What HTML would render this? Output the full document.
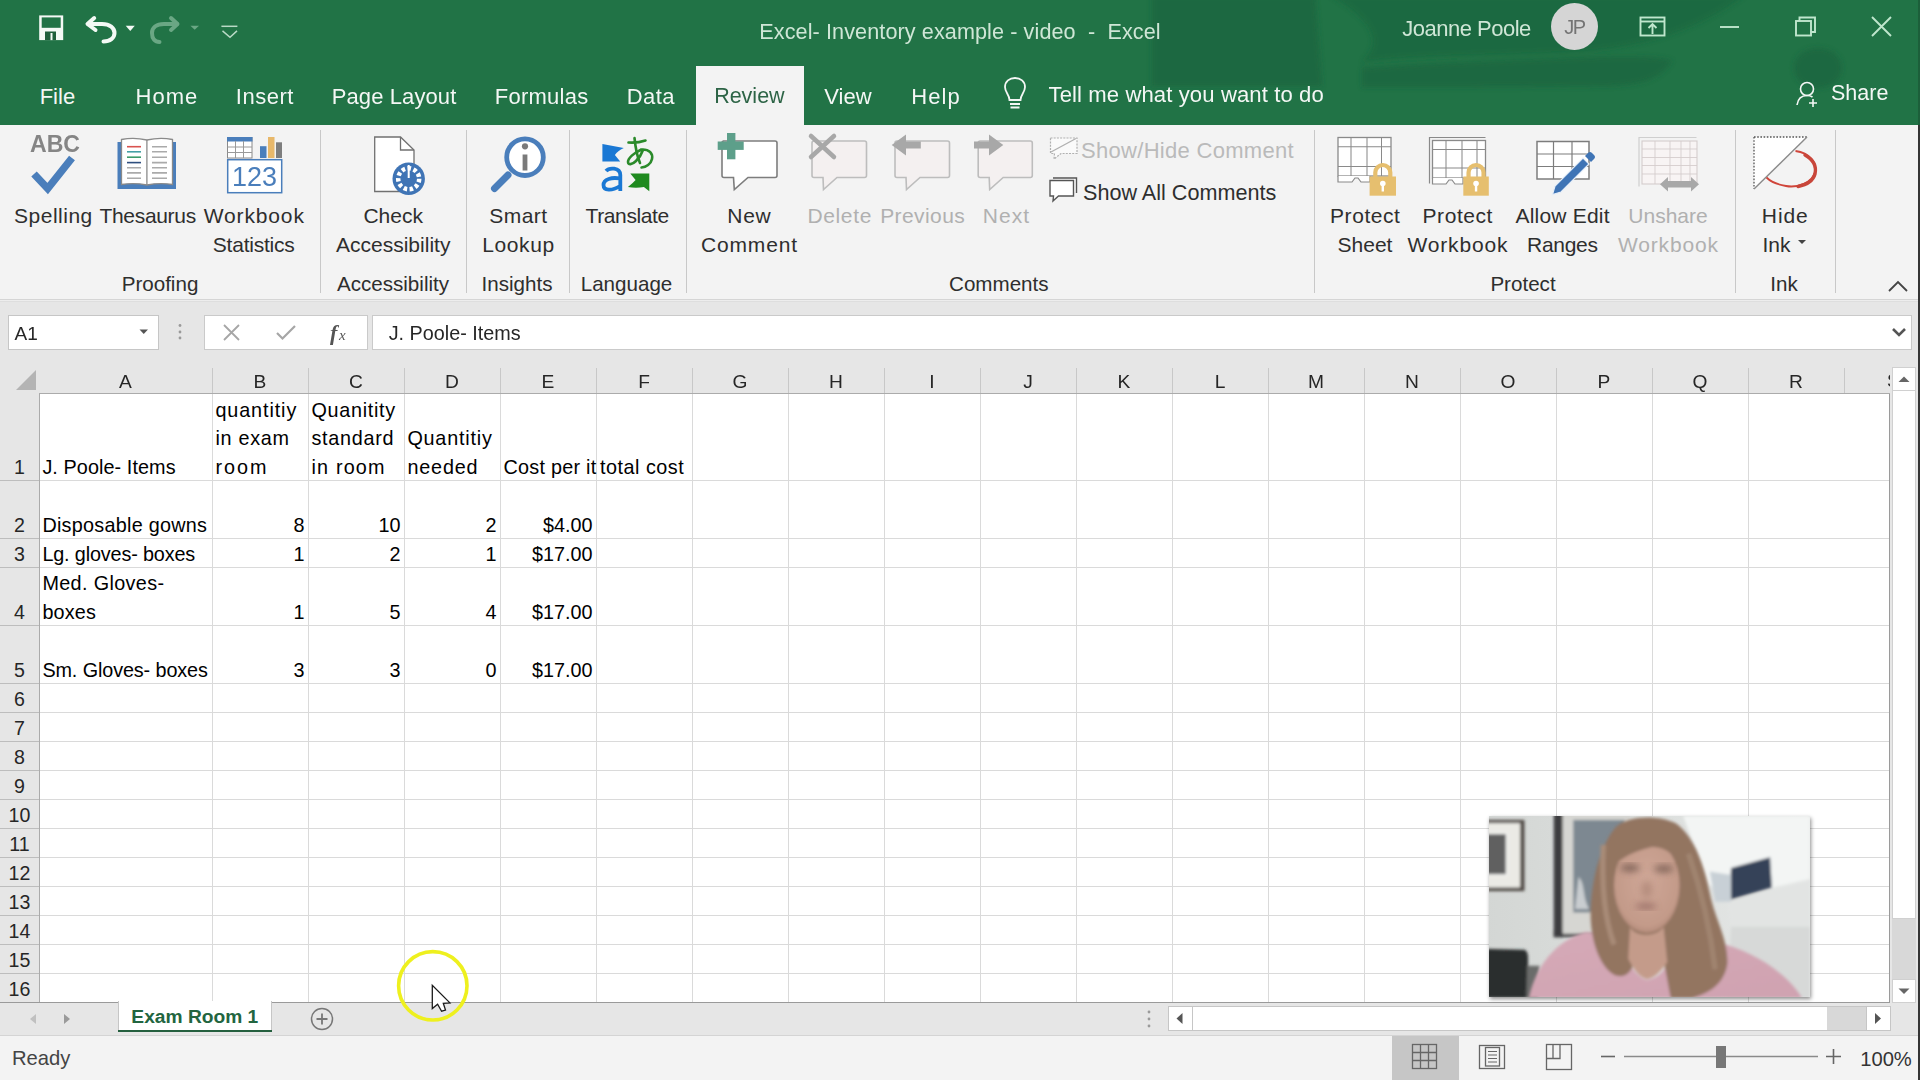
<!DOCTYPE html>
<html><head><meta charset="utf-8"><title>Excel</title>
<style>
html,body{margin:0;padding:0}
body{width:1920px;height:1080px;overflow:hidden;position:relative;background:#fff;font-family:"Liberation Sans",sans-serif}
.t{position:absolute;white-space:nowrap}
.r{position:absolute;display:block}
</style></head><body>
<div class="r" style="left:0px;top:0px;width:1920px;height:125px;background:#217346;"></div>
<svg class="r" style="left:0px;top:0px;" width="1920" height="125" viewBox="0 0 1920 125">
<defs><filter id="bl" x="-20%" y="-50%" width="140%" height="200%"><feGaussianBlur stdDeviation="2.5"/></filter></defs>
<g filter="url(#bl)" fill="#1d6640" opacity="0.8">
<path d="M1152 -5 H1315 L1322 86 H1152 Z"/>
<path d="M1330 -5 H1745 C1700 30 1640 48 1580 52 C1500 56 1420 55 1362 62 C1385 40 1370 20 1330 -5 Z" opacity="0.8"/>
<path d="M1362 68 C1440 62 1520 60 1600 57 C1640 56 1665 57 1672 61 C1660 80 1640 86 1600 86 C1520 87 1420 87 1362 87 Z"/>
<ellipse cx="1818" cy="68" rx="24" ry="20"/>
</g></svg>
<svg class="r" style="left:36px;top:12px;" width="210" height="36" viewBox="0 0 210 36">
<rect x="3.2" y="3.4" width="24" height="24.7" fill="#f4f9f5"/>
<rect x="5.7" y="5.4" width="19" height="10.4" fill="#217346"/>
<rect x="9" y="19.5" width="11" height="8.6" fill="#1f5f3a"/>
<rect x="14.5" y="21" width="2" height="7.1" fill="#f4f9f5"/>
<g fill="none" stroke="#f4f9f5" stroke-width="4" stroke-linecap="round" stroke-linejoin="round">
<path d="M52.5 12 H66 C74 12 78.5 16 78.5 21 C78.5 26 74 29.5 67.5 29.5"/>
<path d="M58.2 6 L51.5 12 L59.5 18"/>
</g>
<path d="M89.7 13.8 H98.8 L94.25 19 Z" fill="#f4f9f5"/>
<g fill="none" stroke="#6aa784" stroke-width="4" stroke-linecap="round" stroke-linejoin="round">
<path d="M141 12 H128 C120 12 116 16 116 21 C116 27 119 30 123.5 30"/>
<path d="M135 6 L141.5 12 L135 18"/>
</g>
<path d="M154.4 13.8 H163 L158.7 17.8 Z" fill="#6aa784"/>
<path d="M185.4 14.3 H201.4" stroke="#b9dac6" stroke-width="1.5"/>
<path d="M186.5 18.9 L194 25.2 L201 18.9" fill="none" stroke="#b9dac6" stroke-width="1.5"/>
</svg>
<div class="t" style="left:460px;width:1000px;text-align:center;top:20.72px;font-size:21.6px;line-height:21.6px;color:#cfe6d6;letter-spacing:0.1px">Excel- Inventory example - video&nbsp; -&nbsp; Excel</div>
<div class="t" style="left:966.5px;width:1000px;text-align:center;top:17.68px;font-size:22px;line-height:22px;color:#cfe6d6;letter-spacing:-0.5px">Joanne Poole</div>
<div class="r" style="left:1551px;top:3px;width:47px;height:47px;border-radius:50%;background:#d5d5d5"></div>
<div class="t" style="left:1074.5px;width:1000px;text-align:center;top:16.87px;font-size:20px;line-height:20px;color:#747474;letter-spacing:-1.5px">JP</div>
<svg class="r" style="left:1630px;top:10px;" width="290" height="36" viewBox="0 0 290 36">
<g fill="none" stroke="#bfe6cd" stroke-width="1.9">
<rect x="10.5" y="7.5" width="24" height="18"/>
<path d="M10.5 11.5 H34.5"/>
<path d="M22.5 24 V14 M18.5 18 L22.5 14 L26.5 18"/>
<path d="M90 17 H109"/>
<rect x="166" y="11" width="15" height="14.5"/>
<path d="M169.5 11 V7.5 H185 V22 H181"/>
<path d="M242 7 L261 26 M261 7 L242 26"/>
</g></svg>
<div class="t" style="left:-442.6px;width:1000px;text-align:center;top:85.88px;font-size:22px;line-height:22px;color:#f4f7f5;">File</div>
<div class="t" style="left:-333.1px;width:1000px;text-align:center;top:85.88px;font-size:22px;line-height:22px;color:#f4f7f5;letter-spacing:1.0px">Home</div>
<div class="t" style="left:-235.14999999999998px;width:1000px;text-align:center;top:85.88px;font-size:22px;line-height:22px;color:#f4f7f5;letter-spacing:0.5px">Insert</div>
<div class="t" style="left:-105.94999999999999px;width:1000px;text-align:center;top:85.88px;font-size:22px;line-height:22px;color:#f4f7f5;letter-spacing:0.1px">Page Layout</div>
<div class="t" style="left:41.625px;width:1000px;text-align:center;top:85.88px;font-size:22px;line-height:22px;color:#f4f7f5;letter-spacing:0.25px">Formulas</div>
<div class="t" style="left:150.80000000000007px;width:1000px;text-align:center;top:85.88px;font-size:22px;line-height:22px;color:#f4f7f5;letter-spacing:0.4px">Data</div>
<div class="t" style="left:347.9px;width:1000px;text-align:center;top:85.88px;font-size:22px;line-height:22px;color:#f4f7f5;">View</div>
<div class="t" style="left:436.04999999999995px;width:1000px;text-align:center;top:85.88px;font-size:22px;line-height:22px;color:#f4f7f5;letter-spacing:1.1px">Help</div>
<div class="r" style="left:696px;top:66px;width:108px;height:59px;background:#f3f3f3;"></div>
<div class="t" style="left:249.39999999999998px;width:1000px;text-align:center;top:85.80px;font-size:21.5px;line-height:21.5px;color:#2d6446;">Review</div>
<svg class="r" style="left:1000px;top:76px;" width="32" height="38" viewBox="0 0 32 38">
<g fill="none" stroke="#f4f7f5" stroke-width="1.8">
<path d="M9.5 24 C9.5 19 5 16.5 5 11 C5 5.5 9.5 2 15 2 C20.5 2 25 5.5 25 11 C25 16.5 20.5 19 20.5 24 Z"/>
<path d="M10 28 H20 M10.5 31.5 H19.5"/>
</g></svg>
<div class="t" style="left:1048.5px;top:83.99px;font-size:22.1px;line-height:22.1px;color:#f4f7f5;letter-spacing:0.1px">Tell me what you want to do</div>
<svg class="r" style="left:1792px;top:80px;" width="32" height="30" viewBox="0 0 32 30">
<g fill="none" stroke="#f4f7f5" stroke-width="1.6">
<circle cx="15" cy="9" r="6.5"/>
<path d="M5 25 C6 18 10 15.5 15 15.5 C17 15.5 19 16 20.5 17"/>
<path d="M21 19 V27 M17 23 H25"/>
</g></svg>
<div class="t" style="left:1831px;top:83.30px;font-size:21.5px;line-height:21.5px;color:#f4f7f5;">Share</div>
<div class="r" style="left:0px;top:125px;width:1920px;height:174px;background:#f3f3f3;"></div>
<div class="r" style="left:0px;top:299px;width:1920px;height:1px;background:#d5d5d5;"></div>
<div class="r" style="left:320px;top:130px;width:1px;height:163px;background:#c8c8c8;"></div>
<div class="r" style="left:466px;top:130px;width:1px;height:163px;background:#c8c8c8;"></div>
<div class="r" style="left:569px;top:130px;width:1px;height:163px;background:#c8c8c8;"></div>
<div class="r" style="left:686px;top:130px;width:1px;height:163px;background:#c8c8c8;"></div>
<div class="r" style="left:1314px;top:130px;width:1px;height:163px;background:#c8c8c8;"></div>
<div class="r" style="left:1735px;top:130px;width:1px;height:163px;background:#c8c8c8;"></div>
<div class="r" style="left:1835px;top:130px;width:1px;height:163px;background:#c8c8c8;"></div>
<div class="t" style="left:-446.55px;width:1000px;text-align:center;top:204.72px;font-size:21px;line-height:21px;color:#2e2e2e;letter-spacing:0.5px">Spelling</div>
<div class="t" style="left:-352.355px;width:1000px;text-align:center;top:204.72px;font-size:21px;line-height:21px;color:#2e2e2e;letter-spacing:-0.31px">Thesaurus</div>
<div class="t" style="left:-245.76999999999998px;width:1000px;text-align:center;top:204.72px;font-size:21px;line-height:21px;color:#2e2e2e;letter-spacing:0.86px">Workbook</div>
<div class="t" style="left:-246.31px;width:1000px;text-align:center;top:233.52px;font-size:21px;line-height:21px;color:#2e2e2e;letter-spacing:-0.22px">Statistics</div>
<div class="t" style="left:-106.80000000000001px;width:1000px;text-align:center;top:204.72px;font-size:21px;line-height:21px;color:#2e2e2e;">Check</div>
<div class="t" style="left:-106.80000000000001px;width:1000px;text-align:center;top:233.52px;font-size:21px;line-height:21px;color:#2e2e2e;">Accessibility</div>
<div class="t" style="left:18.450000000000045px;width:1000px;text-align:center;top:204.72px;font-size:21px;line-height:21px;color:#2e2e2e;letter-spacing:0.5px">Smart</div>
<div class="t" style="left:18.5px;width:1000px;text-align:center;top:233.52px;font-size:21px;line-height:21px;color:#2e2e2e;letter-spacing:0.6px">Lookup</div>
<div class="t" style="left:127.19999999999993px;width:1000px;text-align:center;top:204.72px;font-size:21px;line-height:21px;color:#2e2e2e;letter-spacing:-0.4px">Translate</div>
<div class="t" style="left:249.375px;width:1000px;text-align:center;top:204.72px;font-size:21px;line-height:21px;color:#2e2e2e;letter-spacing:0.75px">New</div>
<div class="t" style="left:249.41499999999996px;width:1000px;text-align:center;top:233.52px;font-size:21px;line-height:21px;color:#2e2e2e;letter-spacing:0.83px">Comment</div>
<div class="t" style="left:339.72px;width:1000px;text-align:center;top:204.72px;font-size:21px;line-height:21px;color:#b0b0b0;letter-spacing:0.64px">Delete</div>
<div class="t" style="left:422.71500000000003px;width:1000px;text-align:center;top:204.72px;font-size:21px;line-height:21px;color:#b0b0b0;letter-spacing:0.43px">Previous</div>
<div class="t" style="left:506.53499999999997px;width:1000px;text-align:center;top:204.72px;font-size:21px;line-height:21px;color:#b0b0b0;letter-spacing:1.07px">Next</div>
<div class="t" style="left:865.2750000000001px;width:1000px;text-align:center;top:204.72px;font-size:21px;line-height:21px;color:#2e2e2e;letter-spacing:0.55px">Protect</div>
<div class="t" style="left:865.0px;width:1000px;text-align:center;top:233.52px;font-size:21px;line-height:21px;color:#2e2e2e;">Sheet</div>
<div class="t" style="left:957.7750000000001px;width:1000px;text-align:center;top:204.72px;font-size:21px;line-height:21px;color:#2e2e2e;letter-spacing:0.55px">Protect</div>
<div class="t" style="left:957.9300000000001px;width:1000px;text-align:center;top:233.52px;font-size:21px;line-height:21px;color:#2e2e2e;letter-spacing:0.86px">Workbook</div>
<div class="t" style="left:1062.61px;width:1000px;text-align:center;top:204.72px;font-size:21px;line-height:21px;color:#2e2e2e;letter-spacing:0.22px">Allow Edit</div>
<div class="t" style="left:1062.36px;width:1000px;text-align:center;top:233.52px;font-size:21px;line-height:21px;color:#2e2e2e;letter-spacing:-0.28px">Ranges</div>
<div class="t" style="left:1168.0px;width:1000px;text-align:center;top:204.72px;font-size:21px;line-height:21px;color:#b0b0b0;">Unshare</div>
<div class="t" style="left:1168.43px;width:1000px;text-align:center;top:233.52px;font-size:21px;line-height:21px;color:#b0b0b0;letter-spacing:0.86px">Workbook</div>
<div class="t" style="left:1285.25px;width:1000px;text-align:center;top:204.72px;font-size:21px;line-height:21px;color:#2e2e2e;letter-spacing:0.9px">Hide</div>
<div class="t" style="left:1276.5px;width:1000px;text-align:center;top:233.52px;font-size:21px;line-height:21px;color:#2e2e2e;">Ink</div>
<svg class="r" style="left:1797px;top:239px;" width="10" height="8" viewBox="0 0 10 8"><path d="M1 1 H9 L5 5 Z" fill="#444"/></svg>
<div class="t" style="left:-340px;width:1000px;text-align:center;top:273.86px;font-size:20.6px;line-height:20.6px;color:#2e2e2e;">Proofing</div>
<div class="t" style="left:-107px;width:1000px;text-align:center;top:273.86px;font-size:20.6px;line-height:20.6px;color:#2e2e2e;">Accessibility</div>
<div class="t" style="left:17px;width:1000px;text-align:center;top:273.86px;font-size:20.6px;line-height:20.6px;color:#2e2e2e;">Insights</div>
<div class="t" style="left:126.5px;width:1000px;text-align:center;top:273.86px;font-size:20.6px;line-height:20.6px;color:#2e2e2e;">Language</div>
<div class="t" style="left:498.79999999999995px;width:1000px;text-align:center;top:273.86px;font-size:20.6px;line-height:20.6px;color:#2e2e2e;">Comments</div>
<div class="t" style="left:1023px;width:1000px;text-align:center;top:273.86px;font-size:20.6px;line-height:20.6px;color:#2e2e2e;">Protect</div>
<div class="t" style="left:1284px;width:1000px;text-align:center;top:273.86px;font-size:20.6px;line-height:20.6px;color:#2e2e2e;">Ink</div>
<div class="t" style="left:1081px;top:140.18px;font-size:22px;line-height:22px;color:#bababa;letter-spacing:0.3px">Show/Hide Comment</div>
<div class="t" style="left:1083px;top:181.72px;font-size:21.6px;line-height:21.6px;color:#2e2e2e;">Show All Comments</div>
<svg class="r" style="left:1886px;top:278px;" width="24" height="16" viewBox="0 0 24 16"><path d="M3 13 L12 4 L21 13" fill="none" stroke="#444" stroke-width="1.8"/></svg>
<svg class="r" style="left:0;top:0" width="1920" height="310" viewBox="0 0 1920 310">
<text x="30" y="152" font-family="Liberation Sans" font-weight="bold" font-size="24" fill="#858585" textLength="50" lengthAdjust="spacingAndGlyphs">ABC</text>
<path d="M34 174 L47.7 188.5 L72 158" fill="none" stroke="#4a7ebb" stroke-width="7.5" stroke-linejoin="miter"/>
<rect x="117.5" y="142" width="58.5" height="47" fill="#4a7ebb"/>
<path d="M121.5 139.5 Q134 137 146.9 140 Q160 137 172.5 139.5 V184.5 Q160 182.5 146.9 185 Q134 182.5 121.5 184.5 Z" fill="#fff" stroke="#8a8a8a" stroke-width="1.3"/>
<path d="M146.9 140 V185" stroke="#8a8a8a" stroke-width="1.3"/>
<g stroke-width="1.6">
<path d="M127 146.7 H141" stroke="#d9534f"/><path d="M127 151.8 H141" stroke="#45a0a6"/>
<path d="M127 157.2 H141" stroke="#3c9b6b"/><path d="M127 162.6 H141" stroke="#2f4f7f"/>
<path d="M127 167.7 H141 M127 172.9 H141 M127 178.3 H141" stroke="#aaa"/>
<path d="M152 146.7 H167 M152 151.8 H167 M152 157.2 H167 M152 162.6 H167 M152 167.7 H167 M152 172.9 H167 M152 178.3 H167" stroke="#aaa"/>
</g>
<rect x="227.5" y="137.5" width="24.5" height="20.5" fill="#fff" stroke="#8a8a8a" stroke-width="1"/>
<rect x="227" y="137" width="25.5" height="4.5" fill="#4a7ebb"/>
<path d="M227.5 147 H252 M227.5 152.5 H252 M235.5 141 V158 M243.5 141 V158" stroke="#9a9a9a" stroke-width="1"/>
<rect x="260" y="146.2" width="6.5" height="11.8" fill="#4a7ebb"/>
<rect x="268" y="137" width="6.5" height="21" fill="#e8b86a"/>
<rect x="276" y="142.3" width="6" height="15.7" fill="#7d7d7d"/>
<rect x="227.7" y="159.7" width="54" height="33" fill="#fff" stroke="#4a7ebb" stroke-width="1.5"/>
<text x="254.5" y="186" font-family="Liberation Sans" font-size="27.5" fill="#4a7ebb" text-anchor="middle" textLength="45" lengthAdjust="spacingAndGlyphs">123</text>
<path d="M374.7 137 H400.5 L414 150 V191.5 H374.7 Z" fill="#fff" stroke="#707070" stroke-width="1.3"/>
<path d="M400.5 137 V150 H414" fill="none" stroke="#707070" stroke-width="1.3"/>
<circle cx="408.7" cy="178.8" r="16.2" fill="#3f74b5"/>
<circle cx="408.7" cy="178.8" r="10.5" fill="none" stroke="#fff" stroke-width="4.5" stroke-dasharray="3.5 2.5"/>
<circle cx="408.7" cy="178.8" r="6" fill="#3f74b5"/>
<path d="M408.7 165 V178" stroke="#fff" stroke-width="2"/>
<circle cx="525" cy="157.2" r="18.3" fill="#fff" stroke="#4a7ebb" stroke-width="4.8"/>
<path d="M494.5 188.5 L508 175" stroke="#4a7ebb" stroke-width="7" stroke-linecap="round"/>
<circle cx="525" cy="146.3" r="3.1" fill="#7a7a7a"/>
<rect x="522.6" y="154.5" width="4.8" height="16" fill="#7a7a7a"/>
<path d="M602.4 143.9 L623.8 148 Q617.5 151 614.9 155.1 L620.2 161.6 H602.4 Z" fill="#1a78d4"/>
<path d="M606 171 C609 167.5 620 167 620.3 175 V191 M620 178.5 C612 177 603.5 179 603.5 185 C603.5 191 612 191 620 186" fill="none" stroke="#1a78d4" stroke-width="3.8"/>
<g fill="none" stroke="#2a8a2a" stroke-width="2.6" stroke-linecap="round">
<path d="M628.5 142.5 C635 143 641 142 645.5 140.5"/>
<path d="M634.5 138 C635.5 148 637 156 640 163"/>
<path d="M641 149.5 C650 149 653 154 652 159 C651 164 646 167 641.5 167.5"/>
<path d="M640.5 150 C634 153 628 158 628 162 C628 165 632 165 636 161 C640 157 642 153 643 150"/>
</g>
<path d="M630.3 173.5 H649.3 V191.3 L643.9 187.1 Q636 188.5 627.9 187.1 Q633 183 635.6 180 Z" fill="#1f8a1f"/>
<path d="M723 141 H775 Q777 141 777 143 V175.5 Q777 177.5 775 177.5 H748 L734.3 189.5 L733.5 177.5 H724 Q722 177.5 722 175.5 V143 Q722 141 724 141 Z" fill="#fff" stroke="#7d7d7d" stroke-width="1.6"/>
<rect x="727" y="133" width="8.4" height="26.3" fill="#5d9f8a"/>
<rect x="717.7" y="141.5" width="26" height="8.4" fill="#5d9f8a"/>
<path d="M814 141 H864.5 Q866.5 141 866.5 143 V175.5 Q866.5 177.5 864.5 177.5 H837 L823.5 189.5 L823 177.5 H814 Q812 177.5 812 175.5 V143 Q812 141 814 141 Z" fill="#f4f0f0" stroke="#bdbdbd" stroke-width="1.6"/><path d="M811 157 L834 136 M811 136 L834 157" stroke="#a8a8a8" stroke-width="4.5" stroke-linecap="round"/><path d="M897 141 H947.5 Q949.5 141 949.5 143 V175.5 Q949.5 177.5 947.5 177.5 H920 L906.5 189.5 L906 177.5 H897 Q895 177.5 895 175.5 V143 Q895 141 897 141 Z" fill="#f4f0f0" stroke="#bdbdbd" stroke-width="1.6"/><path d="M891.7 145 L906 134.5 V141.5 H920.8 V148.5 H906 V155.5 Z" fill="#a8a8a8"/><path d="M980.2 141 H1030.3 Q1032.3 141 1032.3 143 V175.5 Q1032.3 177.5 1030.3 177.5 H1003.2 L989.7 189.5 L989.2 177.5 H980.2 Q978.2 177.5 978.2 175.5 V143 Q978.2 141 980.2 141 Z" fill="#f4f0f0" stroke="#bdbdbd" stroke-width="1.6"/><path d="M1003.3 145 L989 134.5 V141.5 H974 V148.5 H989 V155.5 Z" fill="#a8a8a8"/><path d="M1050.5 138 H1077 V153.5 H1061 L1054 159 L1054.5 153.5 H1050.5 Z" fill="#fafafa" stroke="#b0b0b0" stroke-width="1.2" stroke-dasharray="2 1.2"/>
<path d="M1051 152 L1076 138.5" stroke="#b0b0b0" stroke-width="1.3"/>
<path d="M1053 178 H1076.5 V193 M1050 180.5 H1073.5 V196 H1058.5 L1053 201 L1053.5 196 H1050 Z" fill="#fff" stroke="#555" stroke-width="1.4"/>
<rect x="1338" y="137.5" width="53" height="38.5" fill="#fff" stroke="#8a8a8a" stroke-width="1.3"/><path d="M1351 137.5 V176" stroke="#8a8a8a" stroke-width="1.04"/><path d="M1367 137.5 V176" stroke="#8a8a8a" stroke-width="1.04"/><path d="M1381.5 137.5 V176" stroke="#8a8a8a" stroke-width="1.04"/><path d="M1338 146.75 H1391" stroke="#8a8a8a" stroke-width="1.04"/><path d="M1338 166.5 H1391" stroke="#8a8a8a" stroke-width="1.04"/><path d="M1338 176 V182 H1352 L1355 178 H1358 L1361 182 H1370 V176" fill="#fff" stroke="#8a8a8a" stroke-width="1.2"/><path d="M1375.3 177.5 V172.5 A7.5 7.5 0 0 1 1390.3 172.5 V177.5" fill="none" stroke="#e6bf6f" stroke-width="4.2"/><rect x="1369.6" y="176.5" width="26.4" height="19.2" fill="#e6bf6f"/><circle cx="1382.8" cy="183.5" r="2.8" fill="#fff"/><rect x="1381.6" y="183.5" width="2.4" height="8" fill="#fff"/><path d="M1429.5 183.5 V137.5 H1485.5" fill="none" stroke="#8a8a8a" stroke-width="1.2"/><rect x="1432.5" y="140.5" width="53.0" height="37.5" fill="#fff" stroke="#8a8a8a" stroke-width="1.3"/><path d="M1446 140.5 V178" stroke="#8a8a8a" stroke-width="1.04"/><path d="M1462 140.5 V178" stroke="#8a8a8a" stroke-width="1.04"/><path d="M1477 140.5 V178" stroke="#8a8a8a" stroke-width="1.04"/><path d="M1432.5 149.5 H1485.5" stroke="#8a8a8a" stroke-width="1.04"/><path d="M1432.5 168 H1485.5" stroke="#8a8a8a" stroke-width="1.04"/><path d="M1432.5 178 V184 H1446 L1449 180 H1452 L1455 184 H1463 V178" fill="#fff" stroke="#8a8a8a" stroke-width="1.2"/><path d="M1468.55 177.5 V172.5 A7.5 7.5 0 0 1 1483.55 172.5 V177.5" fill="none" stroke="#e6bf6f" stroke-width="4.2"/><rect x="1463.3" y="176.5" width="25.5" height="19.2" fill="#e6bf6f"/><circle cx="1476.05" cy="183.5" r="2.8" fill="#fff"/><rect x="1474.85" y="183.5" width="2.4" height="8" fill="#fff"/><rect x="1537" y="141.5" width="52" height="37.5" fill="#fff" stroke="#7d7d7d" stroke-width="1.5"/><path d="M1553.5 141.5 V179" stroke="#7d7d7d" stroke-width="1.2000000000000002"/><path d="M1572 141.5 V179" stroke="#7d7d7d" stroke-width="1.2000000000000002"/><path d="M1537 154 H1589" stroke="#7d7d7d" stroke-width="1.2000000000000002"/><path d="M1537 166.5 H1589" stroke="#7d7d7d" stroke-width="1.2000000000000002"/><path d="M1552.5 194.5 L1555 186 L1583 158 L1589 164 L1561 192 Z" fill="#3f74b5" stroke="#e6eef8" stroke-width="1.2"/><path d="M1585 156 L1588 153 Q1590 151 1592 153 L1594 155 Q1596 157 1594 159 L1591 162 Z" fill="#3f74b5"/><path d="M1639 186.5 V137.5 H1696.5" fill="none" stroke="#cfcfcf" stroke-width="1.2"/><rect x="1642" y="141" width="55" height="43" fill="#f8f4f4" stroke="#d4cccc" stroke-width="1.1"/><path d="M1655 141 V184" stroke="#d4cccc" stroke-width="0.8800000000000001"/><path d="M1670 141 V184" stroke="#d4cccc" stroke-width="0.8800000000000001"/><path d="M1681 141 V184" stroke="#d4cccc" stroke-width="0.8800000000000001"/><path d="M1690 141 V184" stroke="#d4cccc" stroke-width="0.8800000000000001"/><path d="M1642 149 H1697" stroke="#d4cccc" stroke-width="0.8800000000000001"/><path d="M1642 157.5 H1697" stroke="#d4cccc" stroke-width="0.8800000000000001"/><path d="M1642 165.5 H1697" stroke="#d4cccc" stroke-width="0.8800000000000001"/><path d="M1642 174 H1697" stroke="#d4cccc" stroke-width="0.8800000000000001"/><path d="M1660 184.2 L1668 177 V181 H1691 V177 L1699 184.2 L1691 191.5 V187.5 H1668 V191.5 Z" fill="#a8a8a8"/><path d="M1754 137 H1807 L1754 189 Z" fill="#fff"/>
<path d="M1754 137 H1807 M1754 137 V189" fill="none" stroke="#555" stroke-width="1.3" stroke-dasharray="1.6 1.6"/>
<path d="M1754 189 L1807 137" stroke="#8a8a8a" stroke-width="1.4"/>
<path d="M1795.5 151 C1810 153 1817 163 1815 172 C1812.5 183 1797 188 1786 186 C1777 184.5 1770 181 1766.5 177.5" fill="none" stroke="#d0453a" stroke-width="1.8"/><path d="M1805 155 C1814 160 1816.5 167 1815 174 C1813 181 1806 185 1798 186.5" fill="none" stroke="#c8463a" stroke-width="3.4" stroke-linecap="round"/>
</svg>
<div class="r" style="left:0px;top:300px;width:1920px;height:64px;background:#e6e6e6;"></div>
<div class="r" style="left:0px;top:300px;width:1920px;height:1px;background:#ededed;"></div>
<div class="r" style="left:0px;top:301px;width:1920px;height:1px;background:#dedede;"></div>
<div class="r" style="left:8px;top:315px;width:151px;height:35px;background:#fff;box-sizing:border-box;border:1px solid #c6c6c6"></div>
<div class="t" style="left:14.5px;top:323.72px;font-size:19px;line-height:19px;color:#262626;">A1</div>
<svg class="r" style="left:138px;top:328px;" width="12" height="8" viewBox="0 0 12 8"><path d="M1.5 1.5 H10 L5.75 6 Z" fill="#555"/></svg>
<svg class="r" style="left:176px;top:320px;" width="8" height="24" viewBox="0 0 8 24"><circle cx="4" cy="5.5" r="1.4" fill="#9a9a9a"/><circle cx="4" cy="12" r="1.4" fill="#9a9a9a"/><circle cx="4" cy="18" r="1.4" fill="#9a9a9a"/></svg>
<div class="r" style="left:204px;top:315px;width:164px;height:35px;background:#fff;box-sizing:border-box;border:1px solid #cacaca"></div>
<svg class="r" style="left:204px;top:315px;" width="164" height="35" viewBox="0 0 164 35">
<path d="M20 10 L35 25 M35 10 L20 25" stroke="#a6a6a6" stroke-width="1.8"/>
<path d="M73 18 L78.5 23.5 L91 11" fill="none" stroke="#a6a6a6" stroke-width="2.2"/>
<text x="126" y="25" font-family="Liberation Serif" font-style="italic" font-weight="bold" font-size="22" fill="#555">f</text>
<text x="135" y="25" font-family="Liberation Serif" font-style="italic" font-size="15" fill="#555">x</text>
</svg>
<div class="r" style="left:372px;top:315px;width:1540px;height:35px;background:#fff;box-sizing:border-box;border:1px solid #cacaca"></div>
<div class="t" style="left:388.7px;top:324.24px;font-size:19.8px;line-height:19.8px;color:#262626;">J. Poole- Items</div>
<svg class="r" style="left:1890px;top:326px;" width="18" height="14" viewBox="0 0 18 14"><path d="M3 3 L9 9 L15 3" fill="none" stroke="#555" stroke-width="2.6"/></svg>
<div class="r" style="left:0px;top:364px;width:1890px;height:30px;background:#e6e6e6;"></div>
<div class="r" style="left:39px;top:393px;width:1851px;height:1px;background:#ababab;"></div>
<svg class="r" style="left:14px;top:368px;" width="24" height="24" viewBox="0 0 24 24"><path d="M22 2 V22 H2 Z" fill="#b4b4b4"/></svg>
<div class="r" style="left:212px;top:368px;width:1px;height:25px;background:#c8c8c8;"></div>
<div class="t" style="left:-374.5px;width:1000px;text-align:center;top:371.95px;font-size:19.2px;line-height:19.2px;color:#262626;">A</div>
<div class="r" style="left:308px;top:368px;width:1px;height:25px;background:#c8c8c8;"></div>
<div class="t" style="left:-240.0px;width:1000px;text-align:center;top:371.95px;font-size:19.2px;line-height:19.2px;color:#262626;">B</div>
<div class="r" style="left:404px;top:368px;width:1px;height:25px;background:#c8c8c8;"></div>
<div class="t" style="left:-144.0px;width:1000px;text-align:center;top:371.95px;font-size:19.2px;line-height:19.2px;color:#262626;">C</div>
<div class="r" style="left:500px;top:368px;width:1px;height:25px;background:#c8c8c8;"></div>
<div class="t" style="left:-48.0px;width:1000px;text-align:center;top:371.95px;font-size:19.2px;line-height:19.2px;color:#262626;">D</div>
<div class="r" style="left:596px;top:368px;width:1px;height:25px;background:#c8c8c8;"></div>
<div class="t" style="left:48.0px;width:1000px;text-align:center;top:371.95px;font-size:19.2px;line-height:19.2px;color:#262626;">E</div>
<div class="r" style="left:692px;top:368px;width:1px;height:25px;background:#c8c8c8;"></div>
<div class="t" style="left:144.0px;width:1000px;text-align:center;top:371.95px;font-size:19.2px;line-height:19.2px;color:#262626;">F</div>
<div class="r" style="left:788px;top:368px;width:1px;height:25px;background:#c8c8c8;"></div>
<div class="t" style="left:240.0px;width:1000px;text-align:center;top:371.95px;font-size:19.2px;line-height:19.2px;color:#262626;">G</div>
<div class="r" style="left:884px;top:368px;width:1px;height:25px;background:#c8c8c8;"></div>
<div class="t" style="left:336.0px;width:1000px;text-align:center;top:371.95px;font-size:19.2px;line-height:19.2px;color:#262626;">H</div>
<div class="r" style="left:980px;top:368px;width:1px;height:25px;background:#c8c8c8;"></div>
<div class="t" style="left:432.0px;width:1000px;text-align:center;top:371.95px;font-size:19.2px;line-height:19.2px;color:#262626;">I</div>
<div class="r" style="left:1076px;top:368px;width:1px;height:25px;background:#c8c8c8;"></div>
<div class="t" style="left:528.0px;width:1000px;text-align:center;top:371.95px;font-size:19.2px;line-height:19.2px;color:#262626;">J</div>
<div class="r" style="left:1172px;top:368px;width:1px;height:25px;background:#c8c8c8;"></div>
<div class="t" style="left:624.0px;width:1000px;text-align:center;top:371.95px;font-size:19.2px;line-height:19.2px;color:#262626;">K</div>
<div class="r" style="left:1268px;top:368px;width:1px;height:25px;background:#c8c8c8;"></div>
<div class="t" style="left:720.0px;width:1000px;text-align:center;top:371.95px;font-size:19.2px;line-height:19.2px;color:#262626;">L</div>
<div class="r" style="left:1364px;top:368px;width:1px;height:25px;background:#c8c8c8;"></div>
<div class="t" style="left:816.0px;width:1000px;text-align:center;top:371.95px;font-size:19.2px;line-height:19.2px;color:#262626;">M</div>
<div class="r" style="left:1460px;top:368px;width:1px;height:25px;background:#c8c8c8;"></div>
<div class="t" style="left:912.0px;width:1000px;text-align:center;top:371.95px;font-size:19.2px;line-height:19.2px;color:#262626;">N</div>
<div class="r" style="left:1556px;top:368px;width:1px;height:25px;background:#c8c8c8;"></div>
<div class="t" style="left:1008.0px;width:1000px;text-align:center;top:371.95px;font-size:19.2px;line-height:19.2px;color:#262626;">O</div>
<div class="r" style="left:1652px;top:368px;width:1px;height:25px;background:#c8c8c8;"></div>
<div class="t" style="left:1104.0px;width:1000px;text-align:center;top:371.95px;font-size:19.2px;line-height:19.2px;color:#262626;">P</div>
<div class="r" style="left:1748px;top:368px;width:1px;height:25px;background:#c8c8c8;"></div>
<div class="t" style="left:1200.0px;width:1000px;text-align:center;top:371.95px;font-size:19.2px;line-height:19.2px;color:#262626;">Q</div>
<div class="r" style="left:1844px;top:368px;width:1px;height:25px;background:#c8c8c8;"></div>
<div class="t" style="left:1296.0px;width:1000px;text-align:center;top:371.95px;font-size:19.2px;line-height:19.2px;color:#262626;">R</div>
<div class="t" style="left:1887px;top:371.86px;font-size:18.6px;line-height:18.6px;color:#262626;"><span style="display:inline-block;width:3px;overflow:hidden">S</span></div>
<div class="r" style="left:0px;top:394px;width:39px;height:608px;background:#e6e6e6;"></div>
<div class="r" style="left:39px;top:394px;width:1px;height:608px;background:#ababab;"></div>
<div class="r" style="left:40px;top:394px;width:1849px;height:608px;background:#fff;"></div>
<div class="r" style="left:212px;top:394px;width:1px;height:608px;background:#dadada;"></div>
<div class="r" style="left:308px;top:394px;width:1px;height:608px;background:#dadada;"></div>
<div class="r" style="left:404px;top:394px;width:1px;height:608px;background:#dadada;"></div>
<div class="r" style="left:500px;top:394px;width:1px;height:608px;background:#dadada;"></div>
<div class="r" style="left:596px;top:394px;width:1px;height:608px;background:#dadada;"></div>
<div class="r" style="left:692px;top:394px;width:1px;height:608px;background:#dadada;"></div>
<div class="r" style="left:788px;top:394px;width:1px;height:608px;background:#dadada;"></div>
<div class="r" style="left:884px;top:394px;width:1px;height:608px;background:#dadada;"></div>
<div class="r" style="left:980px;top:394px;width:1px;height:608px;background:#dadada;"></div>
<div class="r" style="left:1076px;top:394px;width:1px;height:608px;background:#dadada;"></div>
<div class="r" style="left:1172px;top:394px;width:1px;height:608px;background:#dadada;"></div>
<div class="r" style="left:1268px;top:394px;width:1px;height:608px;background:#dadada;"></div>
<div class="r" style="left:1364px;top:394px;width:1px;height:608px;background:#dadada;"></div>
<div class="r" style="left:1460px;top:394px;width:1px;height:608px;background:#dadada;"></div>
<div class="r" style="left:1556px;top:394px;width:1px;height:608px;background:#dadada;"></div>
<div class="r" style="left:1652px;top:394px;width:1px;height:608px;background:#dadada;"></div>
<div class="r" style="left:1748px;top:394px;width:1px;height:608px;background:#dadada;"></div>
<div class="r" style="left:40px;top:480px;width:1849px;height:1px;background:#dadada;"></div>
<div class="r" style="left:0px;top:480px;width:39px;height:1px;background:#bdbdbd;"></div>
<div class="r" style="left:40px;top:538px;width:1849px;height:1px;background:#dadada;"></div>
<div class="r" style="left:0px;top:538px;width:39px;height:1px;background:#bdbdbd;"></div>
<div class="r" style="left:40px;top:567px;width:1849px;height:1px;background:#dadada;"></div>
<div class="r" style="left:0px;top:567px;width:39px;height:1px;background:#bdbdbd;"></div>
<div class="r" style="left:40px;top:625px;width:1849px;height:1px;background:#dadada;"></div>
<div class="r" style="left:0px;top:625px;width:39px;height:1px;background:#bdbdbd;"></div>
<div class="r" style="left:40px;top:683px;width:1849px;height:1px;background:#dadada;"></div>
<div class="r" style="left:0px;top:683px;width:39px;height:1px;background:#bdbdbd;"></div>
<div class="r" style="left:40px;top:712px;width:1849px;height:1px;background:#dadada;"></div>
<div class="r" style="left:0px;top:712px;width:39px;height:1px;background:#bdbdbd;"></div>
<div class="r" style="left:40px;top:741px;width:1849px;height:1px;background:#dadada;"></div>
<div class="r" style="left:0px;top:741px;width:39px;height:1px;background:#bdbdbd;"></div>
<div class="r" style="left:40px;top:770px;width:1849px;height:1px;background:#dadada;"></div>
<div class="r" style="left:0px;top:770px;width:39px;height:1px;background:#bdbdbd;"></div>
<div class="r" style="left:40px;top:799px;width:1849px;height:1px;background:#dadada;"></div>
<div class="r" style="left:0px;top:799px;width:39px;height:1px;background:#bdbdbd;"></div>
<div class="r" style="left:40px;top:828px;width:1849px;height:1px;background:#dadada;"></div>
<div class="r" style="left:0px;top:828px;width:39px;height:1px;background:#bdbdbd;"></div>
<div class="r" style="left:40px;top:857px;width:1849px;height:1px;background:#dadada;"></div>
<div class="r" style="left:0px;top:857px;width:39px;height:1px;background:#bdbdbd;"></div>
<div class="r" style="left:40px;top:886px;width:1849px;height:1px;background:#dadada;"></div>
<div class="r" style="left:0px;top:886px;width:39px;height:1px;background:#bdbdbd;"></div>
<div class="r" style="left:40px;top:915px;width:1849px;height:1px;background:#dadada;"></div>
<div class="r" style="left:0px;top:915px;width:39px;height:1px;background:#bdbdbd;"></div>
<div class="r" style="left:40px;top:944px;width:1849px;height:1px;background:#dadada;"></div>
<div class="r" style="left:0px;top:944px;width:39px;height:1px;background:#bdbdbd;"></div>
<div class="r" style="left:40px;top:973px;width:1849px;height:1px;background:#dadada;"></div>
<div class="r" style="left:0px;top:973px;width:39px;height:1px;background:#bdbdbd;"></div>
<div class="r" style="left:40px;top:1002px;width:1849px;height:1px;background:#dadada;"></div>
<div class="r" style="left:0px;top:1002px;width:39px;height:1px;background:#bdbdbd;"></div>
<div class="r" style="left:1889px;top:394px;width:1px;height:609px;background:#9a9a9a;"></div>
<div class="r" style="left:0px;top:1002px;width:1890px;height:1px;background:#9a9a9a;"></div>
<div class="t" style="left:-480.5px;width:1000px;text-align:center;top:457.81px;font-size:19.6px;line-height:19.6px;color:#262626;">1</div>
<div class="t" style="left:-480.5px;width:1000px;text-align:center;top:515.81px;font-size:19.6px;line-height:19.6px;color:#262626;">2</div>
<div class="t" style="left:-480.5px;width:1000px;text-align:center;top:544.81px;font-size:19.6px;line-height:19.6px;color:#262626;">3</div>
<div class="t" style="left:-480.5px;width:1000px;text-align:center;top:602.81px;font-size:19.6px;line-height:19.6px;color:#262626;">4</div>
<div class="t" style="left:-480.5px;width:1000px;text-align:center;top:660.81px;font-size:19.6px;line-height:19.6px;color:#262626;">5</div>
<div class="t" style="left:-480.5px;width:1000px;text-align:center;top:689.81px;font-size:19.6px;line-height:19.6px;color:#262626;">6</div>
<div class="t" style="left:-480.5px;width:1000px;text-align:center;top:718.81px;font-size:19.6px;line-height:19.6px;color:#262626;">7</div>
<div class="t" style="left:-480.5px;width:1000px;text-align:center;top:747.81px;font-size:19.6px;line-height:19.6px;color:#262626;">8</div>
<div class="t" style="left:-480.5px;width:1000px;text-align:center;top:776.81px;font-size:19.6px;line-height:19.6px;color:#262626;">9</div>
<div class="t" style="left:-480.5px;width:1000px;text-align:center;top:805.81px;font-size:19.6px;line-height:19.6px;color:#262626;">10</div>
<div class="t" style="left:-480.5px;width:1000px;text-align:center;top:834.81px;font-size:19.6px;line-height:19.6px;color:#262626;">11</div>
<div class="t" style="left:-480.5px;width:1000px;text-align:center;top:863.81px;font-size:19.6px;line-height:19.6px;color:#262626;">12</div>
<div class="t" style="left:-480.5px;width:1000px;text-align:center;top:892.81px;font-size:19.6px;line-height:19.6px;color:#262626;">13</div>
<div class="t" style="left:-480.5px;width:1000px;text-align:center;top:921.81px;font-size:19.6px;line-height:19.6px;color:#262626;">14</div>
<div class="t" style="left:-480.5px;width:1000px;text-align:center;top:950.81px;font-size:19.6px;line-height:19.6px;color:#262626;">15</div>
<div class="t" style="left:-480.5px;width:1000px;text-align:center;top:979.81px;font-size:19.6px;line-height:19.6px;color:#262626;">16</div>
<div class="t" style="left:42.4px;top:458.04px;font-size:19.8px;line-height:19.8px;color:#000;letter-spacing:0.09px">J. Poole- Items</div>
<div class="t" style="left:215.4px;top:400.74px;font-size:19.8px;line-height:19.8px;color:#000;letter-spacing:0.9px">quantitiy</div>
<div class="t" style="left:215.4px;top:429.44px;font-size:19.8px;line-height:19.8px;color:#000;letter-spacing:0.72px">in exam</div>
<div class="t" style="left:215.4px;top:458.04px;font-size:19.8px;line-height:19.8px;color:#000;letter-spacing:2.0px">room</div>
<div class="t" style="left:311.4px;top:400.74px;font-size:19.8px;line-height:19.8px;color:#000;letter-spacing:0.72px">Quanitity</div>
<div class="t" style="left:311.4px;top:429.44px;font-size:19.8px;line-height:19.8px;color:#000;letter-spacing:0.74px">standard</div>
<div class="t" style="left:311.4px;top:458.04px;font-size:19.8px;line-height:19.8px;color:#000;letter-spacing:1.2px">in room</div>
<div class="t" style="left:407.4px;top:429.44px;font-size:19.8px;line-height:19.8px;color:#000;letter-spacing:0.79px">Quantitiy</div>
<div class="t" style="left:407.4px;top:458.04px;font-size:19.8px;line-height:19.8px;color:#000;letter-spacing:0.84px">needed</div>
<div class="t" style="left:503.4px;top:458.04px;font-size:19.8px;line-height:19.8px;color:#000;letter-spacing:0.27px">Cost per it</div>
<div class="t" style="left:600px;top:458.04px;font-size:19.8px;line-height:19.8px;color:#000;letter-spacing:0.51px">total cost</div>
<div class="t" style="left:42.4px;top:574.04px;font-size:19.8px;line-height:19.8px;color:#000;letter-spacing:0.37px">Med. Gloves-</div>
<div class="t" style="left:42.4px;top:516.04px;font-size:19.8px;line-height:19.8px;color:#000;letter-spacing:0.27px">Disposable gowns</div>
<div class="t" style="left:-695.5px;width:1000px;text-align:right;top:516.04px;font-size:19.8px;line-height:19.8px;color:#000;">8</div>
<div class="t" style="left:-599.5px;width:1000px;text-align:right;top:516.04px;font-size:19.8px;line-height:19.8px;color:#000;">10</div>
<div class="t" style="left:-503.5px;width:1000px;text-align:right;top:516.04px;font-size:19.8px;line-height:19.8px;color:#000;">2</div>
<div class="t" style="left:-407.5px;width:1000px;text-align:right;top:516.04px;font-size:19.8px;line-height:19.8px;color:#000;">$4.00</div>
<div class="t" style="left:42.4px;top:545.04px;font-size:19.8px;line-height:19.8px;color:#000;letter-spacing:-0.14px">Lg. gloves- boxes</div>
<div class="t" style="left:-695.5px;width:1000px;text-align:right;top:545.04px;font-size:19.8px;line-height:19.8px;color:#000;">1</div>
<div class="t" style="left:-599.5px;width:1000px;text-align:right;top:545.04px;font-size:19.8px;line-height:19.8px;color:#000;">2</div>
<div class="t" style="left:-503.5px;width:1000px;text-align:right;top:545.04px;font-size:19.8px;line-height:19.8px;color:#000;">1</div>
<div class="t" style="left:-407.5px;width:1000px;text-align:right;top:545.04px;font-size:19.8px;line-height:19.8px;color:#000;">$17.00</div>
<div class="t" style="left:42.4px;top:603.04px;font-size:19.8px;line-height:19.8px;color:#000;letter-spacing:0.15px">boxes</div>
<div class="t" style="left:-695.5px;width:1000px;text-align:right;top:603.04px;font-size:19.8px;line-height:19.8px;color:#000;">1</div>
<div class="t" style="left:-599.5px;width:1000px;text-align:right;top:603.04px;font-size:19.8px;line-height:19.8px;color:#000;">5</div>
<div class="t" style="left:-503.5px;width:1000px;text-align:right;top:603.04px;font-size:19.8px;line-height:19.8px;color:#000;">4</div>
<div class="t" style="left:-407.5px;width:1000px;text-align:right;top:603.04px;font-size:19.8px;line-height:19.8px;color:#000;">$17.00</div>
<div class="t" style="left:42.4px;top:661.04px;font-size:19.8px;line-height:19.8px;color:#000;letter-spacing:-0.1px">Sm. Gloves- boxes</div>
<div class="t" style="left:-695.5px;width:1000px;text-align:right;top:661.04px;font-size:19.8px;line-height:19.8px;color:#000;">3</div>
<div class="t" style="left:-599.5px;width:1000px;text-align:right;top:661.04px;font-size:19.8px;line-height:19.8px;color:#000;">3</div>
<div class="t" style="left:-503.5px;width:1000px;text-align:right;top:661.04px;font-size:19.8px;line-height:19.8px;color:#000;">0</div>
<div class="t" style="left:-407.5px;width:1000px;text-align:right;top:661.04px;font-size:19.8px;line-height:19.8px;color:#000;">$17.00</div>
<div class="r" style="left:1890px;top:364px;width:28px;height:672px;background:#e6e6e6;"></div>
<div class="r" style="left:1892px;top:367px;width:24px;height:24px;background:#fff;box-sizing:border-box;border:1px solid #d0d0d0"></div>
<svg class="r" style="left:1892px;top:367px;" width="24" height="24" viewBox="0 0 24 24"><path d="M6.5 15 H17.5 L12 9.5 Z" fill="#666"/></svg>
<div class="r" style="left:1892px;top:391px;width:24px;height:528px;background:#fff;box-sizing:border-box;border:1px solid #d0d0d0;border-top:none"></div>
<div class="r" style="left:1892px;top:919px;width:24px;height:60px;background:#d8d8d8;"></div>
<div class="r" style="left:1892px;top:979px;width:24px;height:24px;background:#fff;box-sizing:border-box;border:1px solid #d0d0d0"></div>
<svg class="r" style="left:1892px;top:979px;" width="24" height="24" viewBox="0 0 24 24"><path d="M6.5 9.5 H17.5 L12 15 Z" fill="#666"/></svg>
<div class="r" style="left:0px;top:1003px;width:1890px;height:32px;background:#e6e6e6;"></div>
<div class="r" style="left:0px;top:1035px;width:1920px;height:1px;background:#d4d4d4;"></div>
<svg class="r" style="left:24px;top:1008px;" width="60" height="22" viewBox="0 0 60 22"><path d="M12 6 L6 11 L12 16 Z" fill="#c0c0c0"/><path d="M40 6 L46 11 L40 16 Z" fill="#9a9a9a"/></svg>
<div class="r" style="left:118px;top:1001px;width:154px;height:31px;background:#fff;box-sizing:border-box;border-left:1px solid #c6c6c6;border-right:1px solid #c6c6c6"></div>
<div class="r" style="left:118px;top:1030px;width:154px;height:2px;background:#245f3e;"></div>
<div class="t" style="left:-305.2px;width:1000px;text-align:center;top:1006.95px;font-size:19.2px;line-height:19.2px;color:#226540;font-weight:bold;">Exam Room 1</div>
<svg class="r" style="left:308px;top:1005px;" width="28" height="28" viewBox="0 0 28 28"><circle cx="14" cy="14" r="10.5" fill="none" stroke="#777" stroke-width="1.5"/><path d="M14 8.5 V19.5 M8.5 14 H19.5" stroke="#777" stroke-width="1.8"/></svg>
<svg class="r" style="left:1140px;top:1007px;" width="20" height="24" viewBox="0 0 20 24"><circle cx="9" cy="5" r="1.4" fill="#9a9a9a"/><circle cx="9" cy="12" r="1.4" fill="#9a9a9a"/><circle cx="9" cy="19" r="1.4" fill="#9a9a9a"/></svg>
<div class="r" style="left:1168px;top:1006px;width:723px;height:25px;background:#fff;box-sizing:border-box;border:1px solid #c6c6c6"></div>
<div class="r" style="left:1192px;top:1006px;width:1px;height:25px;background:#c6c6c6;"></div>
<div class="r" style="left:1827px;top:1007px;width:39px;height:23px;background:#d8d8d8;"></div>
<div class="r" style="left:1866px;top:1006px;width:1px;height:25px;background:#c6c6c6;"></div>
<svg class="r" style="left:1168px;top:1006px;" width="723" height="25" viewBox="0 0 723 25"><path d="M14.5 7 L8.5 12.5 L14.5 18 Z" fill="#555"/><path d="M707 7 L713 12.5 L707 18 Z" fill="#555"/></svg>
<div class="r" style="left:0px;top:1036px;width:1920px;height:44px;background:#f3f3f3;"></div>
<div class="t" style="left:12px;top:1047.90px;font-size:20.2px;line-height:20.2px;color:#444;">Ready</div>
<div class="r" style="left:1392px;top:1036px;width:67px;height:44px;background:#c6c6c6;"></div>
<svg class="r" style="left:1400px;top:1036px;" width="520" height="44" viewBox="0 0 520 44">
<g fill="none" stroke="#666" stroke-width="1.3">
<rect x="12.5" y="8.5" width="24" height="24"/>
<path d="M12.5 16.5 H36.5 M12.5 24.5 H36.5 M20.5 8.5 V32.5 M28.5 8.5 V32.5"/>
<rect x="79.5" y="9.5" width="25" height="23"/>
<rect x="85.5" y="11.5" width="14" height="18.5"/>
<path d="M88 15.5 H97 M88 19 H97 M88 22.5 H97 M88 26 H97" stroke-width="1.1"/>
<rect x="146.5" y="8.5" width="25" height="25"/>
<path d="M146.5 22.5 H160 V8.5 M153 8.5 V22.5"/>
<path d="M201 20.5 H215" stroke-width="1.6"/>
<path d="M224 20.5 H418" stroke="#8a8a8a" stroke-width="1.3"/>
<path d="M426 20.5 H441 M433.5 13 V28" stroke-width="1.6"/>
</g>
<rect x="316" y="10" width="10" height="22" fill="#777"/>
</svg>
<div class="t" style="left:1386px;width:1000px;text-align:center;top:1049.40px;font-size:20.2px;line-height:20.2px;color:#333;">100%</div>
<div class="r" style="left:1489px;top:816px;width:321px;height:181px;box-shadow:1px 2px 4px rgba(0,0,0,0.45);overflow:hidden;background:#ddd"><svg width="321" height="181" viewBox="55 38 1810 1017" preserveAspectRatio="none">
<defs>
<filter id="wb" x="-5%" y="-5%" width="110%" height="110%"><feGaussianBlur stdDeviation="9"/></filter>
<filter id="wb3" x="-5%" y="-5%" width="110%" height="110%"><feGaussianBlur stdDeviation="20"/></filter>
<linearGradient id="wall" x1="0" y1="0" x2="1" y2="0"><stop offset="0" stop-color="#d3d6d4"/><stop offset="0.5" stop-color="#dcdfdd"/><stop offset="1" stop-color="#e6e8e7"/></linearGradient>
<linearGradient id="pink" x1="0" y1="0" x2="1" y2="1"><stop offset="0" stop-color="#d5a9b7"/><stop offset="1" stop-color="#cfa2b0"/></linearGradient>
<radialGradient id="face" cx="0.5" cy="0.45" r="0.6"><stop offset="0" stop-color="#cfa797"/><stop offset="0.8" stop-color="#c39a89"/><stop offset="1" stop-color="#a98170"/></radialGradient>
</defs>
<rect x="0" y="0" width="1920" height="1100" fill="url(#wall)"/>
<g filter="url(#wb)">
<path d="M1150 38 H1865 V390 L1400 500 L1290 420 Z" fill="#f3f5f4"/>
<rect x="40" y="60" width="215" height="400" fill="#514b46"/>
<rect x="40" y="78" width="190" height="362" fill="#ebeae5"/>
<rect x="40" y="130" width="120" height="245" fill="#f4f4f2"/>
<rect x="40" y="140" width="110" height="225" fill="#616161"/>
<rect x="420" y="20" width="52" height="700" fill="#3d3d3f"/><rect x="420" y="680" width="260" height="38" fill="#3d3d3f"/>
<rect x="470" y="20" width="380" height="680" fill="#d6d6d2"/>
<rect x="530" y="60" width="290" height="520" fill="#7d8891"/>
<path d="M560 380 C600 420 580 500 620 560 L540 560 Z" fill="#c9cdd0"/>
<path d="M1400 520 L1865 400 V660 L1420 660 Z" fill="#e2e4e3"/>
<path d="M1420 660 H1865 V1060 H1400 Z" fill="#d7d9d8"/>
<path d="M1420 330 L1640 270 L1650 440 L1410 510 Z" fill="#364259"/>
<path d="M1300 350 L1420 370 L1420 520 L1330 520 Z" fill="#c8d0d6"/>
<path d="M40 800 Q40 780 70 785 L255 790 Q275 800 275 830 V1060 H40 Z" fill="#292d2d"/>
<path d="M270 880 L340 880 L330 1060 L265 1060 Z" fill="#6a6c6b"/>
</g>
<g filter="url(#wb)">
<path d="M280 1060 C320 880 430 740 600 690 L770 700 C830 860 880 940 945 960 C1010 950 1050 900 1070 850 L1390 760 C1580 820 1740 930 1820 1060 Z" fill="url(#pink)"/>
<path d="M770 100 C840 35 1010 30 1110 80 C1220 160 1270 330 1300 470 C1330 620 1400 720 1400 860 C1390 960 1320 1030 1200 1060 L1080 1060 C1060 960 1050 900 1040 850 L870 850 C870 900 830 960 760 930 C680 880 640 760 630 640 C620 480 660 230 770 100 Z" fill="#937460"/>
<ellipse cx="945" cy="430" rx="185" ry="265" fill="url(#face)"/>
<path d="M745 330 C760 180 850 110 960 110 C1060 115 1120 200 1150 330 C1100 250 1030 200 960 215 C880 235 800 270 745 330 Z" fill="#937460"/>
<path d="M850 660 C880 720 1000 720 1040 660 L1060 860 C1020 920 980 950 945 955 C900 940 870 900 840 840 Z" fill="#c49b8a"/>
<path d="M700 200 C690 400 700 600 760 760" stroke="#a88b77" stroke-width="30" fill="none"/>
<path d="M1180 250 C1250 450 1300 650 1330 900" stroke="#a08470" stroke-width="30" fill="none"/>
</g>
<g filter="url(#wb3)" opacity="0.9">
<ellipse cx="850" cy="330" rx="55" ry="18" fill="#6e554c"/>
<ellipse cx="1040" cy="335" rx="55" ry="18" fill="#6e554c"/>
<ellipse cx="940" cy="545" rx="60" ry="14" fill="#8a5f5a"/>
<ellipse cx="945" cy="450" rx="30" ry="50" fill="#b28a7a"/>
</g>
</svg></div>
<svg class="r" style="left:390px;top:945px;" width="90" height="85" viewBox="0 0 90 85">
<circle cx="42.8" cy="40.8" r="34.2" fill="none" stroke="#eef01e" stroke-width="3.6"/>
<path d="M42.3 40.3 V63.6 L47.6 59.2 L51.6 66.2 L55.5 65 L53.3 58.3 L59.9 57.9 Z" fill="#fff" stroke="#1a1a1a" stroke-width="1.3" stroke-linejoin="miter"/>
</svg>
<div class="r" style="left:1918px;top:0px;width:2px;height:125px;background:#1c5f3a;"></div>
<div class="r" style="left:1918px;top:125px;width:2px;height:955px;background:#353535;"></div>
</body></html>
